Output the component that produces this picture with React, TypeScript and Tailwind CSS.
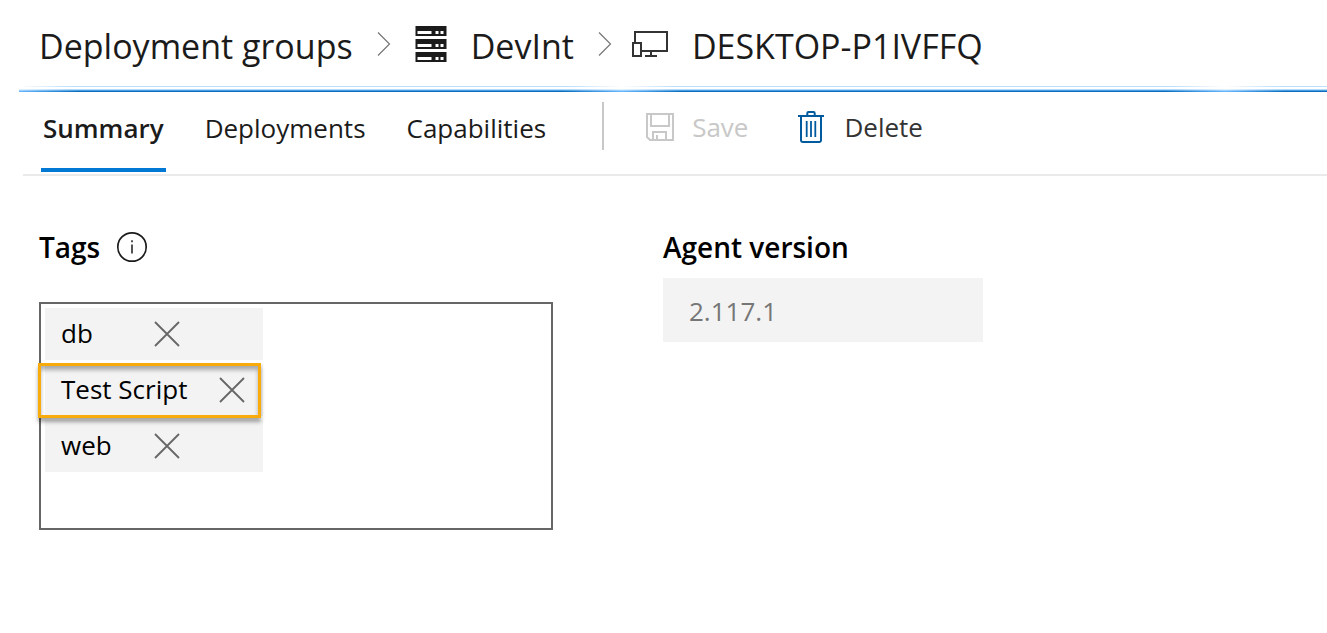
import { useState } from "react";
import clsx from "clsx";

type TabName = "Summary" | "Deployments" | "Capabilities";

interface Tag {
  id: string;
  name: string;
  highlighted?: boolean;
}

const TABS: TabName[] = ["Summary", "Deployments", "Capabilities"];

const INITIAL_TAGS: Tag[] = [
  { id: "db", name: "db" },
  { id: "test-script", name: "Test Script", highlighted: true },
  { id: "web", name: "web" },
];

function ChevronIcon() {
  return (
    <svg className="mb-1" width="14" height="24" viewBox="0 0 14 24" fill="none" stroke="#767676" strokeWidth="1.2" aria-hidden="true">
      <path d="M1 0.5 12.5 12 1 23.5" />
    </svg>
  );
}

function ServerIcon() {
  return (
    <svg className="mb-1" width="32" height="36" viewBox="0 0 32 36" fill="#1b1b1b" aria-hidden="true">
      {[0, 13, 26].map((y) => (
        <g key={y}>
          <rect x="0.5" y={y} width="31" height="10" />
          <rect x="2.5" y={y + 5} width="14" height="3" fill="#fff" />
          <rect x="20.5" y={y + 5} width="3" height="3" fill="#fff" />
          <rect x="25.5" y={y + 5} width="3" height="3" fill="#fff" />
        </g>
      ))}
    </svg>
  );
}

function MachineIcon() {
  return (
    <svg className="mb-1" width="36" height="26" viewBox="0 0 36 26" fill="none" stroke="#333" strokeWidth="2" aria-hidden="true">
      <path d="M3 11V1H35v19H10" />
      <rect x="1" y="12" width="8" height="13" />
      <path d="M19 20v5M13 25h12" />
    </svg>
  );
}

function SaveIcon() {
  return (
    <svg width="28" height="28" viewBox="0 0 28 28" fill="none" stroke="#c8c8c8" strokeWidth="2" aria-hidden="true">
      <path d="M1 1h26v26H4L1 24z" />
      <path d="M5 1v12h18V1M7 27v-8h13v8M11 27v-5" />
    </svg>
  );
}

function TrashIcon() {
  return (
    <svg width="26" height="32" viewBox="0 0 26 32" fill="none" stroke="#005a9e" strokeWidth="2" aria-hidden="true">
      <path d="M0 5h26M9.3 5V2.2a1.2 1.2 0 0 1 1.2-1.2h5a1.2 1.2 0 0 1 1.2 1.2V5" />
      <path d="M3 5v24.2A1.8 1.8 0 0 0 4.8 31h16.4a1.8 1.8 0 0 0 1.8-1.8V5" />
      <path d="M8.7 10v16M13 10v16M17.3 10v16" strokeWidth="1.8" />
    </svg>
  );
}

function InfoIcon() {
  return (
    <svg width="32" height="32" viewBox="0 0 32 32" fill="none" stroke="#1b1b1b" strokeWidth="1.7" aria-hidden="true">
      <circle cx="16" cy="16" r="14.2" />
      <path d="M16 13.5v9M16 9.2v2" strokeWidth="1.5" />
    </svg>
  );
}

function CloseIcon() {
  return (
    <svg width="26" height="26" viewBox="0 0 26 26" fill="none" stroke="#666" strokeWidth="1.8" aria-hidden="true">
      <path d="M1 1l24 24M25 1L1 25" />
    </svg>
  );
}

export default function App() {
  const [activeTab, setActiveTab] = useState<TabName>("Summary");
  const [tags, setTags] = useState<Tag[]>(INITIAL_TAGS);

  const removeTag = (id: string) => {
    setTags((current) => current.filter((tag) => tag.id !== id));
  };

  return (
    <div className="min-h-screen bg-white font-['Segoe_UI','Open_Sans',sans-serif] text-[26px] leading-9 text-[#1b1b1b]">
      <header className="pl-[19px]">
        <nav aria-label="Breadcrumb" className="pt-[21px] pb-[15px] pl-5">
          <ol className="flex items-center text-[34px] leading-[50px] whitespace-nowrap">
            <li>
              <a href="#groups">Deployment groups</a>
            </li>
            <li className="flex items-center pl-6">
              <ChevronIcon />
              <a href="#devint" className="flex items-center gap-6 pl-6">
                <ServerIcon />
                DevInt
              </a>
            </li>
            <li className="flex items-center pl-6">
              <ChevronIcon />
              <span aria-current="page" className="flex items-center gap-6 pl-5">
                <MachineIcon />
                DESKTOP-P1IVFFQ
              </span>
            </li>
          </ol>
        </nav>
        {/* shiny divider, the highlight repeats every 603px */}
        <div className="h-px bg-[repeating-linear-gradient(90deg,#fff_0px,#bfe0fb_50px,#bfe0fb_553px,#fff_603px)]" />
        <div className="h-[2px]" />
        <div className="h-px bg-[repeating-linear-gradient(90deg,#e4f2ff_0px,#b5d9f8_50px,#b5d9f8_553px,#e4f2ff_603px)]" />
        <div className="h-px bg-[repeating-linear-gradient(90deg,#9fd2ff_0px,#4a9fe0_60px,#4a9fe0_543px,#9fd2ff_603px)]" />
        <div className="h-px bg-[repeating-linear-gradient(90deg,#6ab8ff_0px,#0b6cbd_60px,#0b6cbd_543px,#6ab8ff_603px)]" />
      </header>

      <div className="ml-[23px] flex h-[84px] items-start border-b-2 border-[#eaeaea] pl-[18px]">
        <div role="tablist" className="flex gap-[37px]">
          {TABS.map((tab) => (
            <button
              key={tab}
              type="button"
              role="tab"
              aria-selected={activeTab === tab}
              onClick={() => setActiveTab(tab)}
              className={clsx(
                "h-20 border-b-4 px-[2px] pb-1",
                activeTab === tab ? "border-[#0078d4] font-semibold" : "border-transparent"
              )}
            >
              {tab}
            </button>
          ))}
        </div>
        <div className="mt-[10px] ml-[54px] h-12 w-[2px] bg-[#c8c8c8]" />
        <div className="ml-[42px] flex h-[70px] items-center gap-[50px]">
          <button type="button" disabled className="flex items-center gap-[18px] text-[#c8c8c8]">
            <SaveIcon />
            Save
          </button>
          <button type="button" className="flex items-center gap-5 text-[#333]">
            <TrashIcon />
            Delete
          </button>
        </div>
      </div>

      <main className="flex gap-[110px] pt-[53px] pl-[39px] text-black">
        <section className="w-[514px]">
          <div className="flex items-center gap-4">
            <h2 className="text-[28px] leading-9 font-semibold">Tags</h2>
            <button type="button" aria-label="About tags">
              <InfoIcon />
            </button>
          </div>
          <ul className="mt-[37px] flex min-h-[228px] flex-col gap-1 border-2 border-[#666] p-1">
            {tags.map((tag) => (
              <li
                key={tag.id}
                className="relative flex h-[52px] w-[218px] items-center gap-8 bg-[#f3f3f3] pl-4"
              >
                <span className="min-w-[61px] pb-[2px]">{tag.name}</span>
                <button type="button" aria-label={`Remove ${tag.name}`} onClick={() => removeTag(tag.id)}>
                  <CloseIcon />
                </button>
                {tag.highlighted ? (
                  <span className="pointer-events-none absolute -top-px right-[2px] -bottom-[2px] -left-[7px] z-10 border-3 border-[#faab0c] shadow-[0_4px_4px_rgba(0,0,0,0.35),inset_0_4px_4px_rgba(0,0,0,0.3)]" />
                ) : null}
              </li>
            ))}
          </ul>
        </section>

        <section>
          <label htmlFor="agent-version" className="block text-[28px] leading-9 font-semibold">
            Agent version
          </label>
          <input
            id="agent-version"
            type="text"
            readOnly
            value="2.117.1"
            className="mt-[13px] block h-16 w-80 bg-[#f3f3f3] px-[26px] pt-[2px] text-[#767676] outline-none"
          />
        </section>
      </main>
    </div>
  );
}
